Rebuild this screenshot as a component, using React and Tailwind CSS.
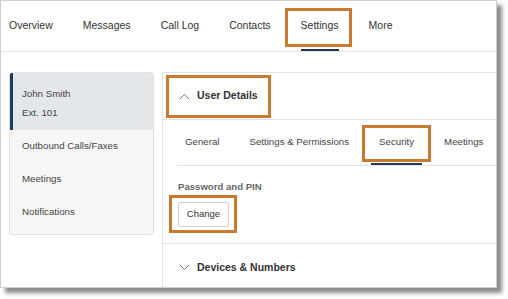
import React from 'react';

const font = { fontFamily: '"Liberation Sans", Arial, sans-serif' };

function Highlight({ className }) {
  return <span className={`pointer-events-none absolute border-[3px] border-[#c97a2e] ${className}`} />;
}

function ChevronUp() {
  return (
    <svg width="11" height="7" viewBox="0 0 11 7" className="shrink-0">
      <path d="M0.8 6.2 L5.5 1.4 L10.2 6.2" fill="none" stroke="#777" strokeWidth="1" />
    </svg>
  );
}

function ChevronDown() {
  return (
    <svg width="11" height="7" viewBox="0 0 11 7" className="shrink-0">
      <path d="M0.8 0.8 L5.5 5.6 L10.2 0.8" fill="none" stroke="#777" strokeWidth="1" />
    </svg>
  );
}

const navItems = ['Overview', 'Messages', 'Call Log', 'Contacts', 'Settings', 'More'];
const sideItems = ['Outbound Calls/Faxes', 'Meetings', 'Notifications'];
const subTabs = ['General', 'Settings & Permissions', 'Security', 'Meetings'];

export default function App() {
  return (
    <div className="w-[508px] h-[299px] bg-white overflow-hidden" style={font}>
      <div className="w-[497px] h-[288px] bg-white border border-[#cfcfcf] shadow-[5px_5px_4px_rgba(0,0,0,0.45)] overflow-hidden flex flex-col">
        {/* Top nav */}
        <div className="h-[51px] shrink-0 border-b border-[#e2e2e2] flex items-stretch gap-[30px] pl-[8px] text-[10.5px] text-[#333]">
          {navItems.map((item) => (
            <div key={item} className="relative flex items-center">
              <span>{item}</span>
              {item === 'Settings' && (
                <>
                  <span className="absolute left-0 right-0 bottom-0 h-[2px] bg-[#1e3a56]" />
                  <Highlight className="-left-[16px] -right-[13px] top-[7px] bottom-[4px]" />
                </>
              )}
            </div>
          ))}
        </div>

        {/* Body */}
        <div className="flex flex-1 pt-[20px] gap-[8px] pl-[8px]">
          {/* Sidebar */}
          <div className="w-[145px] h-[163px] shrink-0 rounded-[3px] border border-[#e2e2e2] bg-[#f6f6f6] overflow-hidden text-[9.7px] text-[#444]">
            <div className="bg-[#e4e7ea] border-l-[3px] border-[#1c3b57] pl-[9px] pt-[11px] pb-[8px] leading-[19px]">
              <div>John Smith</div>
              <div>Ext. 101</div>
            </div>
            {sideItems.map((item) => (
              <div key={item} className="h-[33px] flex items-center pl-[12px]">
                {item}
              </div>
            ))}
          </div>

          {/* Main panel */}
          <div className="flex-1 border-l border-t border-[#e2e2e2] flex flex-col">
            <div className="h-[47px] shrink-0 border-b border-[#e2e2e2] flex items-center pl-[16px]">
              <div className="relative flex items-center gap-[7px]">
                <ChevronUp />
                <span className="text-[10.5px] font-bold text-[#333]">User Details</span>
                <Highlight className="-left-[13px] -right-[13px] -top-[13px] -bottom-[14px]" />
              </div>
            </div>

            <div className="ml-[14px] h-[46px] shrink-0 border-b border-[#e2e2e2] flex items-stretch gap-[14px] text-[9.7px] text-[#444]">
              {subTabs.map((tab) => (
                <div key={tab} className="relative flex items-center px-[8px]">
                  <span>{tab}</span>
                  {tab === 'Security' && (
                    <>
                      <span className="absolute left-0 right-0 bottom-0 h-[2px] bg-[#1e3a56]" />
                      <Highlight className="-left-[9px] -right-[9px] top-[5px] bottom-[3px]" />
                    </>
                  )}
                </div>
              ))}
            </div>

            <div className="pl-[15px] pt-[15px] pb-[16px] border-b border-[#e2e2e2]">
              <div className="text-[9.6px] font-bold text-[#666] leading-[12px]">Password and PIN</div>
              <div className="mt-[9px] relative inline-flex">
                <button className="h-[25px] w-[51px] border border-[#cfcfcf] rounded-[2px] bg-white text-[9.5px] text-[#333] flex items-center justify-center">
                  Change
                </button>
                <Highlight className="-left-[9px] -right-[8px] -top-[7px] -bottom-[6px]" />
              </div>
            </div>

            <div className="h-[47px] shrink-0 flex items-center gap-[7px] pl-[16px]">
              <ChevronDown />
              <span className="text-[10.5px] font-bold text-[#333]">Devices &amp; Numbers</span>
            </div>
          </div>
        </div>
      </div>
    </div>
  );
}
